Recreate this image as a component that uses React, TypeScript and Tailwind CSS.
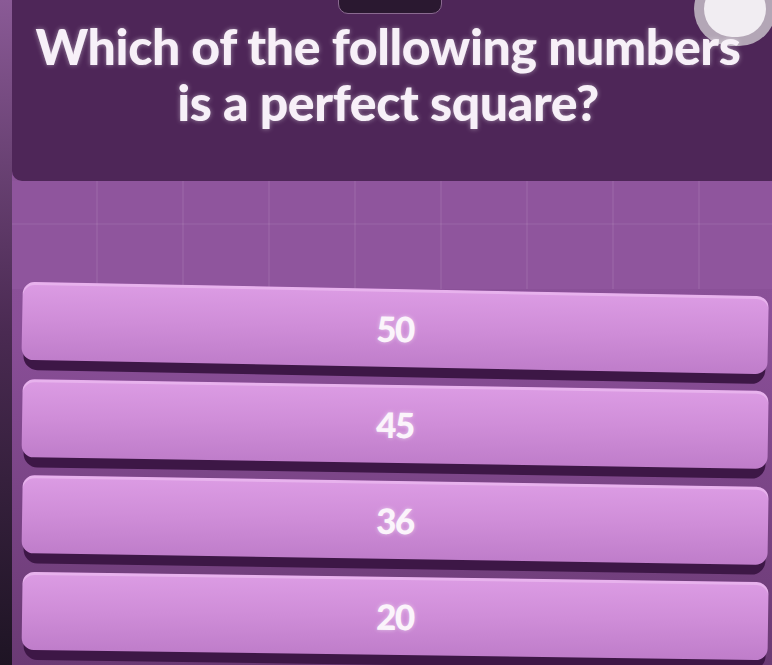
import React from "react";

const answers = ["50", "45", "36", "20"];

function Answer({ label, tilt }: { label: string; tilt: string }) {
  return (
    <div className={`relative h-[88px] ${tilt}`}>
      <div className="absolute inset-x-[2px] top-[8px] bottom-0 rounded-[14px] bg-[#3d1746]" />
      <div className="relative h-[78px] rounded-[12px] bg-gradient-to-b from-[#dc9ce4] via-[#cf8dd8] to-[#bf7dca] flex items-center justify-center shadow-[inset_0_3px_0_rgba(255,220,255,0.35)]">
        <span className="text-[35px] font-black text-[#fbf4fb] tracking-[-1.5px] [font-family:Lato,'Open_Sans',sans-serif] [text-shadow:0_0_4px_rgba(255,255,255,0.5)]">
          {label}
        </span>
      </div>
    </div>
  );
}

export default function App() {
  const tilts = ["rotate-[1.1deg]", "rotate-[0.9deg]", "rotate-[0.9deg]", "rotate-[0.8deg]"];
  return (
    <div className="relative w-[772px] h-[665px] overflow-hidden bg-gradient-to-b from-[#8d5a9a] via-[#8a4f98] to-[#6a3a74] flex">
      {/* top notch */}
      <div className="absolute z-10 left-[338px] top-[-4px] w-[104px] h-[18px] rounded-b-[10px] bg-[#2a1830] border border-[#8a6a90]" />
      {/* circle button */}
      <div className="absolute z-10 left-[694px] top-[-28px] w-[82px] h-[74px] rounded-full bg-[#b3a6b6] flex items-center justify-center">
        <div className="w-[62px] h-[56px] rounded-full bg-[#f1edf2]" />
      </div>
      {/* left bezel */}
      <div className="w-[12px] shrink-0 bg-gradient-to-b from-[#8a5a96] via-[#4a2a52] to-[#1e1424]" />
      <div className="flex-1 flex flex-col">
        {/* header card */}
        <div className="relative h-[181px] rounded-bl-[10px] bg-[#4e2658] flex flex-col items-center pt-[18px] pr-[8px]">
          <p className="relative z-20 text-center text-[#f7f0f8] font-black text-[50px] leading-[56px] tracking-[-0.4px] [font-family:Lato,'Open_Sans',sans-serif] [text-shadow:0_0_5px_rgba(255,255,255,0.45)]">
            Which of the following numbers
            <br />
            is a perfect square?
          </p>
        </div>
        {/* background grid area */}
        <div className="relative h-[108px] bg-[#8f559d]">
          <div className="absolute inset-0 bg-[linear-gradient(90deg,transparent_84px,rgba(255,255,255,0.06)_84px,rgba(255,255,255,0.06)_86px,transparent_86px)] bg-[length:86px_100%]" />
          <div className="absolute left-0 right-0 top-[42px] h-[2px] bg-[rgba(255,255,255,0.05)]" />
        </div>
        {/* answers */}
        <div className="flex flex-col gap-[8px] pl-[10px] pr-[4px]">
          {answers.map((a, i) => (
            <Answer key={a} label={a} tilt={tilts[i]} />
          ))}
        </div>
      </div>
    </div>
  );
}
